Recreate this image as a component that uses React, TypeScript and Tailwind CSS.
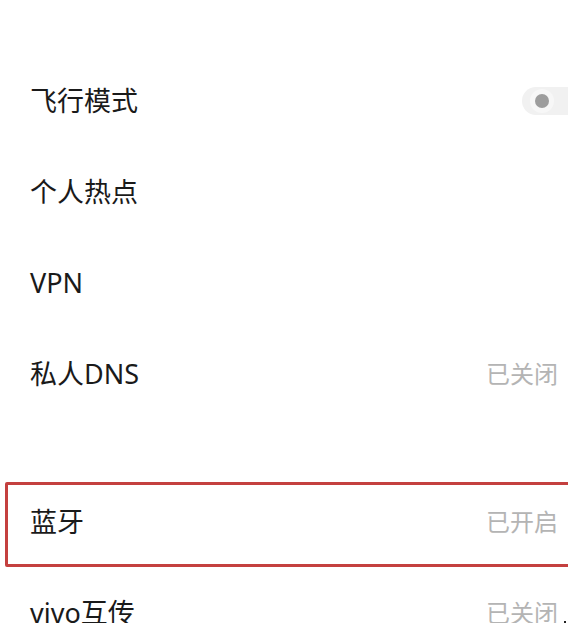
import type { ReactNode } from "react";

type Row = {
    label: string;
    value?: string;
    toggle?: boolean;
};

const topRows: Row[] = [
    { label: "飞行模式", toggle: true },
    { label: "个人热点" },
    { label: "VPN" },
    { label: "私人DNS", value: "已关闭" },
];

const fontStack =
    "font-['Noto_Sans','Noto_Sans_CJK_SC',sans-serif]";

function Toggle() {
    return (
        <div className="mr-[-30px] flex h-[28px] w-[66px] items-center rounded-full bg-[#f1f1f1] pl-[8px]">
            <div className="flex h-[24px] w-[24px] items-center justify-center rounded-full bg-[#f7f7f7]">
                <div className="h-[14px] w-[14px] rounded-full bg-[#9d9d9d]" />
            </div>
        </div>
    );
}

function SettingRow({ row, children }: { row: Row; children?: ReactNode }) {
    return (
        <div className="relative flex h-[91px] items-center justify-between pl-[30px] pr-[10px]">
            <span className="text-[27px] leading-none text-[#1a1a1a]">
                {row.label}
            </span>
            {row.toggle && <Toggle />}
            {row.value && (
                <span className="text-[24px] leading-none text-[#b4b4b4]">
                    {row.value}
                </span>
            )}
            {children}
        </div>
    );
}

export default function App() {
    return (
        <div
            className={`h-[623px] w-[568px] overflow-hidden bg-white ${fontStack}`}
        >
            <div className="pt-[55px]">
                {topRows.map((row) => (
                    <SettingRow key={row.label} row={row} />
                ))}
            </div>

            <div className="mt-[57px]">
                <SettingRow row={{ label: "蓝牙", value: "已开启" }}>
                    {/* annotation box drawn over the row */}
                    <div className="pointer-events-none absolute bottom-[0px] left-[5px] right-[-6px] top-[6px] rounded-[2px] border-[3px] border-[#c4403f]" />
                </SettingRow>
                <SettingRow row={{ label: "vivo互传", value: "已关闭" }}>
                    <div className="absolute right-[2px] top-[54px] h-[2px] w-[2px] bg-[#222]" />
                </SettingRow>
            </div>
        </div>
    );
}
